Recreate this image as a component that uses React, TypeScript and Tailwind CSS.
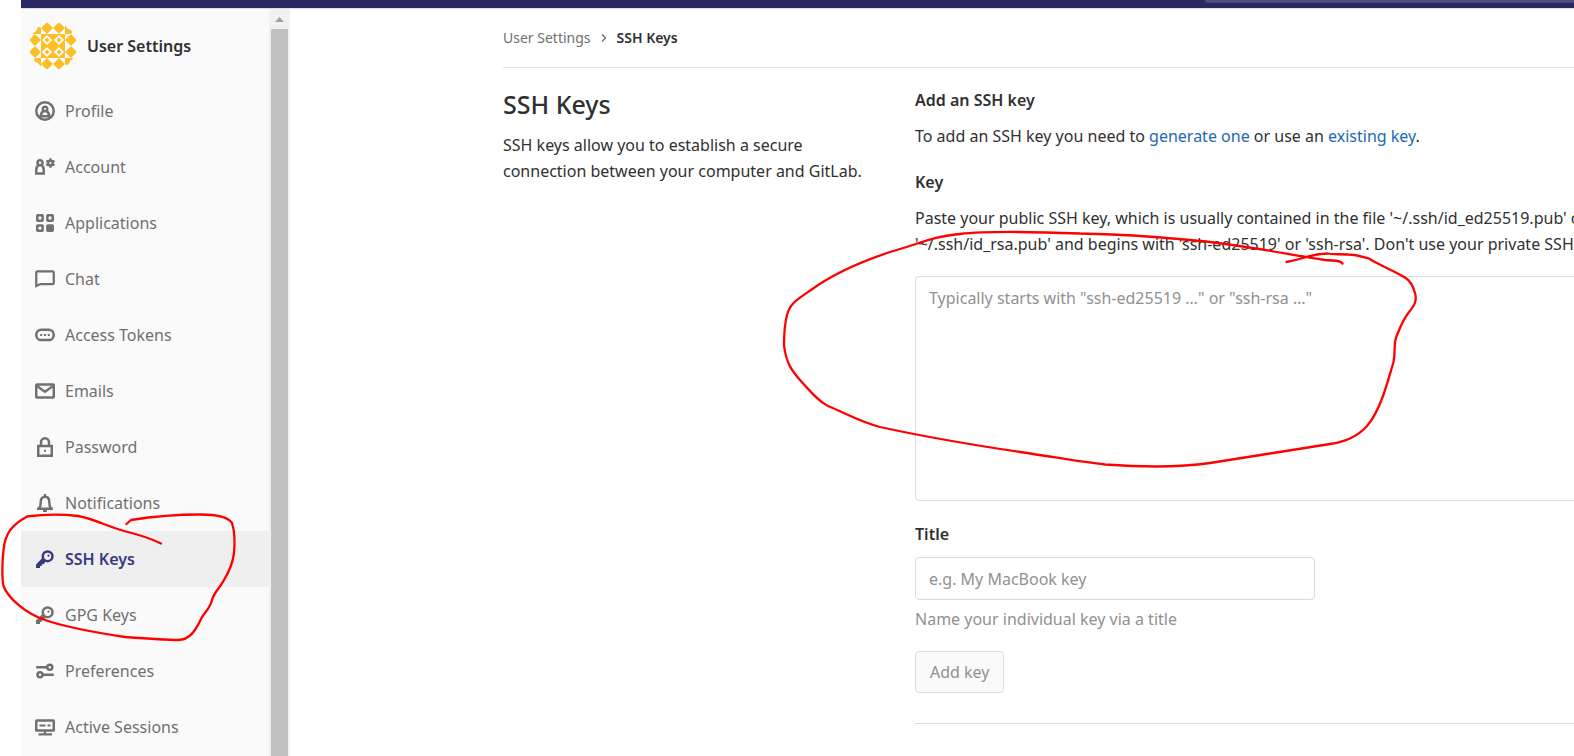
import type { ReactNode } from 'react';

type NavItem = {
  label: string;
  icon: ReactNode;
  active?: boolean;
};

// 16x16 icons, drawn with currentColor
const icons = {
  profile: (
    <>
      <circle cx="8" cy="8" r="7" />
      <circle cx="8" cy="6.4" r="1.8" />
      <path d="M4.4 13.4C4.4 10.8 5.3 9 6.6 8M11.6 13.4C11.6 10.8 10.7 9 9.4 8M4.4 12.2h7.2" />
    </>
  ),
  account: (
    <>
      <circle cx="4" cy="4.5" r="2" />
      <path d="M1 13.2V10.4C1 8.4 1.8 7.2 2.8 6.4M7 13.2V10.4C7 8.4 6.2 7.2 5.2 6.4M0 13.2h8" />
      <circle cx="12.3" cy="4.8" r="1.9" />
      <path
        d="M12.3 1v1.4M12.3 7.2v1.4M9 2.9l1.2.7M14.4 6l1.2.7M9 6.7l1.2-.7M14.4 3.6l1.2-.7"
        strokeWidth="1.8"
      />
    </>
  ),
  applications: (
    <>
      <rect x="1.8" y="1.8" width="4.3" height="4.3" rx=".4" />
      <rect x="9.9" y="1.8" width="4.3" height="4.3" rx=".4" />
      <rect x="1.8" y="9.9" width="4.3" height="4.3" rx=".4" />
      <rect x="9.9" y="9.9" width="4.3" height="4.3" rx=".4" fill="currentColor" />
    </>
  ),
  chat: <path d="M1 13.6V2.8c0-.5.3-.9.9-.9h12.2c.6 0 .9.4.9.9v8.3c0 .5-.3.9-.9.9H4.3z" strokeWidth="1.8" />,
  token: (
    <>
      <rect x="1" y="3.8" width="14" height="8.2" rx="4.1" />
      <path d="M4.2 7.9h1.6M7.2 7.9h1.6M10.2 7.9h1.6" strokeWidth="1.6" />
    </>
  ),
  mail: (
    <>
      <rect x="1" y="2.8" width="14" height="10.4" rx=".6" />
      <path d="M1.6 4l6.4 4.6L14.4 4" strokeWidth="1.8" />
    </>
  ),
  lock: (
    <>
      <rect x="2.6" y="7.2" width="10.8" height="7.8" />
      <path d="M4.8 7V4.2a3.2 3.2 0 0 1 6.4 0V7" />
      <path d="M7.2 11h1.6" strokeWidth="1.6" />
    </>
  ),
  bell: (
    <>
      <path d="M3.4 12.4c.9-1.2 1.2-2.800 1.2-5.4C4.6 4.6 5.9 3 8 3s3.4 1.6 3.4 4c0 2.6.3 4.2 1.2 5.4M1.6 12.6h12.8M8 .8v2" />
      <path d="M6.4 14.4h3.2" strokeWidth="1.6" />
    </>
  ),
  key: (
    <>
      <circle cx="10.1" cy="5.8" r="3.9" />
      <path d="M5.6 7.4L.8 12.4V15.2H4V13.6H5.4V12.2H6.8L8.5 10.2z" fill="currentColor" stroke="none" />
      <circle cx="10.8" cy="5.2" r=".9" fill="currentColor" stroke="none" />
    </>
  ),
  preferences: (
    <>
      <path d="M1 4.9h9M6 10.9h9" />
      <circle cx="11.8" cy="4.9" r="2" />
      <circle cx="4" cy="10.9" r="2" />
    </>
  ),
  monitor: (
    <>
      <rect x="1" y="2.8" width="14" height="8" rx=".3" />
      <path d="M3.6 6.8h4.8M10 6.8h2.4" strokeWidth="1.6" />
      <path d="M8 11v3M2.8 13.9h10.8" strokeWidth="1.8" />
    </>
  ),
};

const navItems: NavItem[] = [
  { label: 'Profile', icon: icons.profile },
  { label: 'Account', icon: icons.account },
  { label: 'Applications', icon: icons.applications },
  { label: 'Chat', icon: icons.chat },
  { label: 'Access Tokens', icon: icons.token },
  { label: 'Emails', icon: icons.mail },
  { label: 'Password', icon: icons.lock },
  { label: 'Notifications', icon: icons.bell },
  { label: 'SSH Keys', icon: icons.key, active: true },
  { label: 'GPG Keys', icon: icons.key },
  { label: 'Preferences', icon: icons.preferences },
  { label: 'Active Sessions', icon: icons.monitor },
];

// Identicon: a 4x4 grid of 12px cells
const edgeCells = [
  [18, 6], [30, 6], [6, 18], [6, 30], [42, 18], [42, 30], [18, 42], [30, 42],
];
const innerCells = [
  [18, 18], [30, 18], [18, 30], [30, 30],
];

function Avatar() {
  return (
    <svg viewBox="0 0 48 48" className="h-12 w-12 shrink-0 rounded-full bg-white" fill="#fcbf27" aria-hidden="true">
      {edgeCells.map(([x, y]) => (
        <path key={`${x}-${y}`} d="M0-6L6 0L0 6L-6 0z" transform={`translate(${x} ${y})`} />
      ))}
      <path d="M12 12h24v24H12z" />
      {innerCells.map(([x, y]) => (
        <g key={`${x}-${y}`} transform={`translate(${x} ${y})`}>
          <path d="M0-5L5 0L0 5L-5 0z" fill="#fff" />
          <path d="M0-2.6L2.6 0L0 2.6L-2.6 0z" />
        </g>
      ))}
      {[0, 90, 180, 270].map((angle) => (
        <path key={angle} d="M12 12H3L7 9L9 4L12 6z" transform={`rotate(${angle} 24 24)`} />
      ))}
    </svg>
  );
}

function Sidebar() {
  return (
    <aside className="flex w-[269px] shrink-0">
      <div className="min-w-0 flex-1 bg-[#fafafa]">
        <a href="#settings" className="flex h-[74px] items-center gap-2.5 pl-2 font-semibold text-[#303030]">
          <Avatar />
          User Settings
        </a>
        <nav>
          <ul>
            {navItems.map((item) => (
              <li key={item.label}>
                <a
                  href="#nav"
                  className={
                    item.active
                      ? 'flex h-14 items-center gap-2.5 bg-[#efefef] pl-3.5 font-semibold text-[#393982]'
                      : 'flex h-14 items-center gap-2.5 pl-3.5 text-[#707070]'
                  }
                >
                  <svg
                    viewBox="0 0 16 16"
                    className="h-5 w-5 shrink-0"
                    fill="none"
                    stroke="currentColor"
                    strokeWidth="2"
                    aria-hidden="true"
                  >
                    {item.icon}
                  </svg>
                  {item.label}
                </a>
              </li>
            ))}
          </ul>
        </nav>
      </div>
      <div className="flex w-[21px] flex-col items-center bg-[#f1f1f1]">
        <svg viewBox="0 0 9 5" className="mt-2 mb-[7px] h-[5px] w-[9px] shrink-0" aria-hidden="true">
          <path d="M0 5L4.5 0L9 5z" fill="#a0a0a0" />
        </svg>
        <div className="w-[17px] flex-1 bg-[#c1c1c1]" />
      </div>
    </aside>
  );
}

function KeyForm() {
  return (
    <form className="w-[820px] shrink-0 border-b border-[#dbdbdb] pb-[30px]">
      <h5 className="mt-[19px] font-semibold">Add an SSH key</h5>
      <p className="mt-2.5">
        To add an SSH key you need to{' '}
        <a href="#generate" className="text-[#1b69b6]">generate one</a> or use an{' '}
        <a href="#existing" className="text-[#1b69b6]">existing key</a>.
      </p>
      <label htmlFor="key" className="mt-5 block font-semibold">Key</label>
      <p className="mt-2.5">
        Paste your public SSH key, which is usually contained in the file '~/.ssh/id_ed25519.pub' or
        <br />
        '~/.ssh/id_rsa.pub' and begins with 'ssh-ed25519' or 'ssh-rsa'. Don't use your private SSH key.
      </p>
      <textarea
        id="key"
        placeholder={'Typically starts with "ssh-ed25519 …" or "ssh-rsa …"'}
        className="mt-[19px] block h-[225px] w-full resize-none rounded border border-[#dbdbdb] px-[13px] py-2 placeholder:text-[#919191]"
      />
      <label htmlFor="title" className="mt-5 block font-semibold">Title</label>
      <input
        id="title"
        type="text"
        placeholder="e.g. My MacBook key"
        className="mt-2.5 block h-[43px] w-[400px] rounded border border-[#dbdbdb] px-[13px] placeholder:text-[#919191]"
      />
      <p className="mt-1.5 text-[#919191]">Name your individual key via a title</p>
      <button type="button" className="mt-[19px] h-[42px] rounded border border-[#dbdbdb] bg-[#fafafa] px-3.5 text-[#919191]">
        Add key
      </button>
    </form>
  );
}

// Freehand red marker strokes over the page
function Markup() {
  return (
    <svg
      viewBox="0 0 1574 756"
      className="pointer-events-none absolute top-0 left-0 h-[756px] w-[1574px]"
      fill="none"
      stroke="#ff0000"
      strokeWidth="2.3"
      strokeLinecap="round"
      strokeLinejoin="round"
      aria-hidden="true"
    >
      <path d="M161 543.5C150 538 140 535 126 531.5C108 527 95 519 78 516C62 514 45 514 27 516.5C12 525 5 533 3.5 550C2 562 2 580 3.5 586C8 598 25 613 45 620C65 627 92 632 125 637C145 638.5 165 640 178 640C190 640 196 630 202 617C206 611 210 608 212 600C214 592 220 588 224 580C230 570 233 562 234 553C235 542 235 532 232 523C228 517 215 514.5 200 514.5C180 514.5 150 517 131 520L126.5 524" />
      <path d="M1342.5 263.5C1340 260 1335 261 1325 260C1290 255 1240 244 1190 240C1150 236 1120 234 1080 233.5C1040 232 990 230.5 960 234C930 237 925 242 890 252C860 262 830 276 811 290C798 299 790 303 787 315C784.5 325 784 335 784 345C786 364 793 372 800 380C810 391 818 401 828 406C845 413 860 422 880 427C930 438 980 446 1020 452C1055 457 1080 462 1105 464.500C1140 467 1180 467.500 1210 463C1250 457 1290 450 1330 444C1345 442 1358 436 1367 426C1374 418 1379 407 1383 396C1388 382 1391 370 1393.5 362C1396 348 1393 344 1397 335C1401 325 1405 317 1409 312C1415 305 1417 300 1415 293C1413 285 1409 280 1405 277.5C1394 271 1380 265 1373 261L1369 258.5C1360 256 1356 254.5 1348 254.5C1338 254 1332 254.5 1328 253.5C1308 254 1305 259 1286.5 262" />
    </svg>
  );
}

export default function App() {
  return (
    <div className="relative flex h-screen flex-col overflow-hidden bg-white font-['Noto_Sans','Open_Sans',sans-serif] text-base leading-[26px] text-[#303030]">
      <header className="ml-[21px] flex h-[9px] shrink-0 border-b border-[#dcdce4] bg-[#292961]">
        <div className="ml-auto h-[3px] w-[369px] rounded-bl bg-[#4c4c7e]" />
      </header>
      <div className="flex min-h-0 flex-1 pl-[21px]">
        <Sidebar />
        <main className="min-w-0 flex-1 overflow-hidden pl-[213px]">
          <div className="flex h-[59px] items-center gap-2 border-b border-[#e5e5e5] text-sm">
            <a href="#settings" className="text-[#707070]">User Settings</a>
            <svg viewBox="0 0 10 10" className="h-2.5 w-2.5" fill="none" stroke="#707070" strokeWidth="1.4" aria-hidden="true">
              <path d="M3 1.5L6.5 5L3 8.5" />
            </svg>
            <a href="#ssh" className="font-semibold">SSH Keys</a>
          </div>
          <div className="flex">
            <section className="w-[412px] shrink-0">
              <h4 className="mt-[23px] text-[25px] leading-[26px] font-medium">SSH Keys</h4>
              <p className="mt-[15px]">
                SSH keys allow you to establish a secure
                <br />
                connection between your computer and GitLab.
              </p>
            </section>
            <KeyForm />
          </div>
        </main>
      </div>
      <Markup />
    </div>
  );
}
